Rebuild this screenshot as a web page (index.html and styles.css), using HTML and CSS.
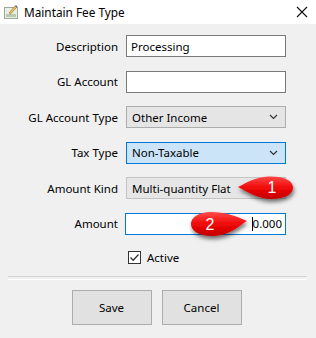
FILE: index.html
```html
<!DOCTYPE html>
<html lang="en">
<head>
  <meta charset="UTF-8" />
  <title>Maintain Fee Type</title>
  <link rel="stylesheet" href="styles.css">
</head>
<body>

  <div class="window">
    <!-- Title bar -->
    <div class="titlebar">
      <svg class="app-icon" width="16" height="16" viewBox="0 0 16 16">
        <rect x="1.5" y="3.5" width="13" height="11" fill="#e8efe4" stroke="#9aa89a"/>
        <rect x="3" y="10" width="10" height="3" fill="#b9c9b0"/>
        <path d="M6 9 L12 2 L13.5 3.5 L7.5 10 Z" fill="#f2c14e" stroke="#8a7040" stroke-width="0.6"/>
        <path d="M12 2 L13.5 3.5 L14.5 2.5 L13 1 Z" fill="#7a5cc0"/>
      </svg>
      <span class="title">Maintain Fee Type</span>
      <svg class="close" width="12" height="12" viewBox="0 0 12 12">
        <path d="M1 1 L11 11 M11 1 L1 11" stroke="#111" stroke-width="1.1"/>
      </svg>
    </div>

    <!-- Form -->
    <div class="content">
      <div class="form">
        <label>Description</label>
        <div class="field text">Processing</div>

        <label>GL Account</label>
        <div class="field text"></div>

        <label>GL Account Type</label>
        <div class="field combo">
          <span>Other Income</span>
          <svg class="chev" width="9" height="6" viewBox="0 0 9 6"><path d="M1 1 L4.5 4.5 L8 1" fill="none" stroke="#333" stroke-width="1.2"/></svg>
        </div>

        <label>Tax Type</label>
        <div class="field combo focused">
          <span>Non-Taxable</span>
          <svg class="chev" width="9" height="6" viewBox="0 0 9 6"><path d="M1 1 L4.5 4.5 L8 1" fill="none" stroke="#333" stroke-width="1.2"/></svg>
        </div>

        <label>Amount Kind</label>
        <div class="field combo readonly">
          <span>Multi-quantity Flat</span>
        </div>

        <label>Amount</label>
        <div class="field text number"><span class="caret"></span>0.000</div>
      </div>

      <div class="check-row">
        <span class="checkbox">
          <svg width="11" height="11" viewBox="0 0 11 11"><path d="M1.5 5.5 L4.2 8.2 L9.5 2.5" fill="none" stroke="#333" stroke-width="1.3"/></svg>
        </span>
        <span>Active</span>
      </div>

      <div class="separator"></div>

      <div class="buttons">
        <button>Save</button>
        <button>Cancel</button>
      </div>
    </div>

    <!-- Annotation callouts -->
    <svg class="callouts" width="316" height="338" viewBox="0 0 316 338">
      <defs>
        <linearGradient id="red" x1="0" y1="0" x2="0" y2="1">
          <stop offset="0" stop-color="#ff4a4a"/>
          <stop offset="0.5" stop-color="#f00808"/>
          <stop offset="1" stop-color="#c40000"/>
        </linearGradient>
        <filter id="shadow" x="-30%" y="-40%" width="160%" height="200%">
          <feDropShadow dx="1" dy="3" stdDeviation="2" flood-color="#000" flood-opacity="0.55"/>
        </filter>
      </defs>
      <g filter="url(#shadow)">
        <path d="M238 187 C248 182 256 177 268 176.5 C285 176 293 181 293 187.5 C293 194 285 199 271 199 C258 199 248 192 238 187 Z" fill="url(#red)"/>
        <path d="M247 221 C238 226 230 236 212 236 C198 236 191 230 191 224 C191 217 199 212 211 212 C226 212 236 216 247 221 Z" fill="url(#red)"/>
      </g>
      <text x="272" y="193" class="num">1</text>
      <text x="210" y="230" class="num">2</text>
    </svg>
  </div>

</body>
</html>
```

FILE: styles.css
```css
body {
  margin: 0;
  font-family: "Noto Sans", "Open Sans", sans-serif;
  font-size: 11.5px;
  color: #000;
}
.window {
  position: relative;
  width: 316px;
  height: 338px;
  background: #f0f0f0;
  overflow: hidden;
}
.titlebar {
  display: flex;
  align-items: center;
  height: 24px;
  background: #fff;
  padding-left: 3px;
}
.app-icon {
  margin-right: 5px;
}
.title {
  font-size: 11.8px;
  flex: 1;
}
.close {
  margin-right: 8px;
}
.content {
  padding-top: 11px;
}
.form {
  display: grid;
  grid-template-columns: 118px 160px;
  column-gap: 8px;
  row-gap: 13.6px;
  align-items: center;
}
.form label {
  text-align: right;
}
.field {
  box-sizing: border-box;
  height: 22px;
  display: flex;
  align-items: center;
  padding: 0 4px;
  border: 1px solid #7a7a7a;
  background: #fff;
}
.combo {
  justify-content: space-between;
  background: #e5e5e5;
  border-color: #adadad;
  padding: 0 7px 0 5px;
}
.combo.focused {
  background: #cce4f7;
  border-color: #0078d7;
}
.combo.readonly {
  background: #e6e6e6;
  border-color: #c4c4c4;
}
.number {
  justify-content: flex-end;
  border-color: #0078d7;
  margin-left: -1px;
  padding-right: 3px;
}
.caret {
  width: 1px;
  height: 14px;
  background: #000;
}
.check-row {
  display: flex;
  align-items: center;
  margin: 16px 0 0 128px;
  height: 14px;
}
.checkbox {
  box-sizing: border-box;
  width: 13px;
  height: 13px;
  border: 1px solid #333;
  background: #fff;
  margin-right: 6px;
  display: flex;
  align-items: center;
  justify-content: center;
}
.separator {
  margin: 11px 9px 0 8px;
  height: 2px;
  border-top: 1px solid #d5d5d5;
  border-bottom: 1px solid #fff;
}
.buttons {
  display: flex;
  justify-content: center;
  gap: 10px;
  margin-top: 10px;
  padding-right: 3px;
}
.buttons button {
  width: 80px;
  height: 35px;
  font-family: inherit;
  font-size: 11.5px;
  background: #e1e1e1;
  border: 1px solid #adadad;
  color: #000;
}
.callouts {
  position: absolute;
  top: 0;
  left: 0;
  pointer-events: none;
}
.num {
  font-family: "Liberation Sans", sans-serif;
  font-size: 16px;
  fill: #fff;
  text-anchor: middle;
}
```
